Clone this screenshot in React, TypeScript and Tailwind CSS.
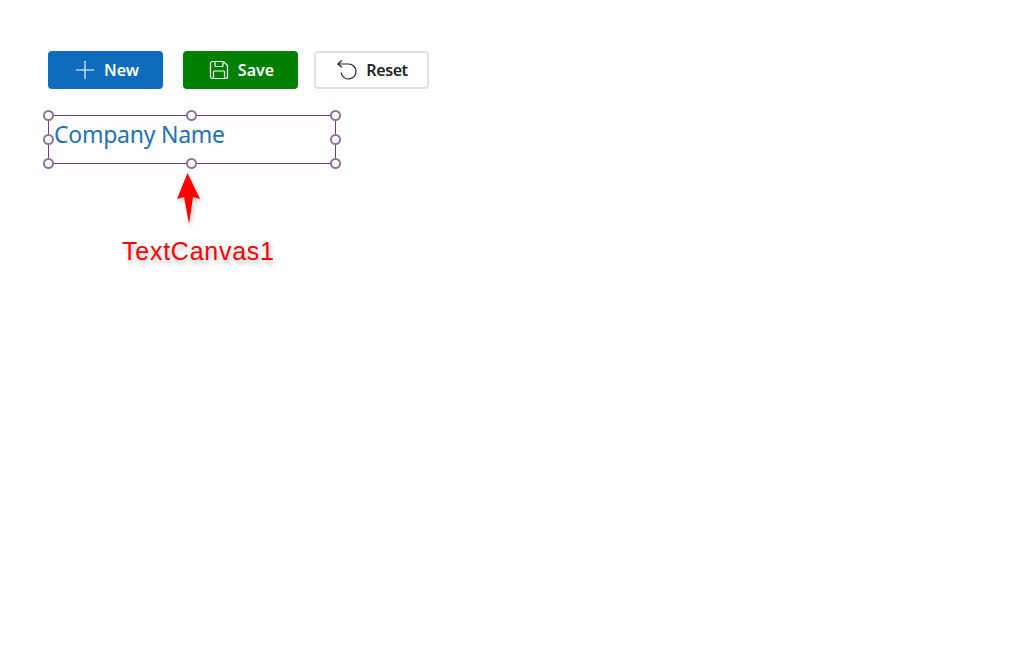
import React from 'react';
import { Plus } from 'lucide-react';

const buttonClass = 'flex h-[38px] w-[115px] items-center justify-center rounded-[4px] text-[16px] font-semibold';

function Handle({ hidden, middle }: { hidden?: boolean; middle?: boolean }) {
  return (
    <span className={`h-[11px] w-[11px] rounded-full border-2 border-[#8f7399] ${middle ? '-ml-[2px]' : ''} ${hidden ? 'invisible' : 'bg-white'}`} />
  );
}

function HandleRow({ noMiddle }: { noMiddle?: boolean }) {
  return (
    <div className="flex justify-between">
      <Handle />
      <Handle middle hidden={noMiddle} />
      <Handle />
    </div>
  );
}

export default function App() {
  return (
    <div className="relative h-[667px] w-[1029px] overflow-hidden bg-white pl-[48px] pt-[51px] font-['Noto_Sans','Open_Sans',sans-serif]">
      <div className="flex items-center">
        <button type="button" className={`${buttonClass} gap-[4px] bg-[#0f6cbd] pr-[2px] text-white`}>
          <Plus size={30} strokeWidth={0.9} />
          <span>New</span>
        </button>
        <button type="button" className={`${buttonClass} ml-[20px] gap-[7px] bg-[#008000] text-white`}>
          <svg width="24" height="24" viewBox="0 0 24 24" fill="none" stroke="currentColor" strokeWidth="1.2" strokeLinejoin="round">
            <path d="M5.5 3.5 H16.5 L20.5 7.5 V18.5 A2 2 0 0 1 18.5 20.5 H5.5 A2 2 0 0 1 3.5 18.5 V5.5 A2 2 0 0 1 5.5 3.5 Z" />
            <path d="M8 3.5 V7.5 A1 1 0 0 0 9 8.5 H15 A1 1 0 0 0 16 7.5 V4" />
            <path d="M6.5 20.5 V14 A1 1 0 0 1 7.5 13 H16.5 A1 1 0 0 1 17.5 14 V20.5" />
          </svg>
          <span>Save</span>
        </button>
        <button type="button" className={`${buttonClass} ml-[16px] gap-[9px] border-2 border-[#e3e3e3] bg-white pl-[2px] tracking-[-0.4px] text-[#242424]`}>
          <svg width="20" height="20" viewBox="0 0 20 20" fill="none" stroke="currentColor" strokeWidth="1.2" strokeLinecap="round" strokeLinejoin="round">
            <path d="M4.5 0.8 L1 4 L4.5 7" />
            <path d="M1 4 H11.5 A7.5 7.5 0 1 1 4.2 13" />
          </svg>
          <span>Reset</span>
        </button>
      </div>

      <div className="relative mt-[26px] h-[49px] w-[288px] border border-[#6b3f7d] pl-[5px] text-[23px] leading-[36px] tracking-[-0.25px] text-[#2272b4]">
        Company Name
        <div className="absolute inset-x-[-6px] inset-y-[-6px] flex flex-col justify-between">
          <HandleRow />
          <HandleRow noMiddle />
          <HandleRow />
        </div>
      </div>

      <div className="absolute left-[122px] top-[168px] flex flex-col">
        <svg className="ml-[48px]" width="40" height="62" viewBox="0 0 40 62">
          <path d="M17.5 5 L30 31 L23 29 L19 56 L14 29 L7 31 Z" fill="#000" opacity="0.2" transform="translate(2 3)" style={{ filter: 'blur(2px)' }} />
          <path d="M17.5 5 L30 31 L23 29 L19 56 L14 29 L7 31 Z" fill="#ff0000" />
        </svg>
        <div className="mt-[6px] font-['Liberation_Sans',sans-serif] text-[25px] leading-[30px] tracking-[0.75px] text-[#ff0000] [text-shadow:2px_4px_5px_rgba(0,0,0,0.25)]">
          TextCanvas1
        </div>
      </div>
    </div>
  );
}
